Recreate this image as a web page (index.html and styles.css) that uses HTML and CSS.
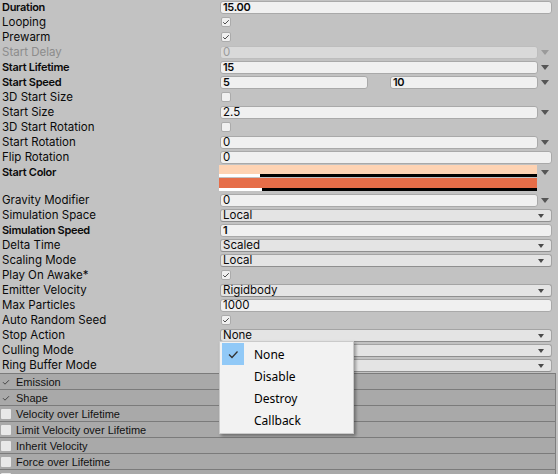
FILE: index.html
```html
<!DOCTYPE html>
<html>
<head>
<meta charset="utf-8">
<link rel="stylesheet" href="styles.css">
</head>
<body>
<div class="inspector">
  <div class="props">
    <div class="row"><div class="label b">Duration</div><div class="ctrl"><div class="field b">15.00</div></div></div>
    <div class="row"><div class="label">Looping</div><div class="ctrl"><span class="cb"><svg viewBox="0 0 10 10"><polyline points="2.2,5.2 4,7 7.8,3.2"/></svg></span></div></div>
    <div class="row"><div class="label">Prewarm</div><div class="ctrl"><span class="cb"><svg viewBox="0 0 10 10"><polyline points="2.2,5.2 4,7 7.8,3.2"/></svg></span></div></div>
    <div class="row dis"><div class="label">Start Delay</div><div class="ctrl"><div class="field">0</div><span class="curve"><svg viewBox="0 0 8 5"><polygon points="0,0 8,0 4,5"/></svg></span></div></div>
    <div class="row"><div class="label b">Start Lifetime</div><div class="ctrl"><div class="field b">15</div><span class="curve"><svg viewBox="0 0 8 5"><polygon points="0,0 8,0 4,5"/></svg></span></div></div>
    <div class="row"><div class="label b">Start Speed</div><div class="ctrl"><div class="pair"><div class="field b">5</div><div class="field b">10</div></div><span class="curve"><svg viewBox="0 0 8 5"><polygon points="0,0 8,0 4,5"/></svg></span></div></div>
    <div class="row"><div class="label">3D Start Size</div><div class="ctrl"><span class="cb"></span></div></div>
    <div class="row"><div class="label">Start Size</div><div class="ctrl"><div class="field">2.5</div><span class="curve"><svg viewBox="0 0 8 5"><polygon points="0,0 8,0 4,5"/></svg></span></div></div>
    <div class="row"><div class="label">3D Start Rotation</div><div class="ctrl"><span class="cb"></span></div></div>
    <div class="row"><div class="label">Start Rotation</div><div class="ctrl"><div class="field">0</div><span class="curve"><svg viewBox="0 0 8 5"><polygon points="0,0 8,0 4,5"/></svg></span></div></div>
    <div class="row"><div class="label">Flip Rotation</div><div class="ctrl"><div class="field">0</div></div></div>
    <div class="row tall"><div class="label b">Start Color</div><div class="ctrl"><div class="grad"><div class="band peach"></div><div class="strip s1"></div><div class="band orange"></div><div class="strip s2"></div></div><span class="curve"><svg viewBox="0 0 8 5"><polygon points="0,0 8,0 4,5"/></svg></span></div></div>
    <div class="row"><div class="label">Gravity Modifier</div><div class="ctrl"><div class="field">0</div><span class="curve"><svg viewBox="0 0 8 5"><polygon points="0,0 8,0 4,5"/></svg></span></div></div>
    <div class="row"><div class="label">Simulation Space</div><div class="ctrl"><div class="popup">Local</div></div></div>
    <div class="row"><div class="label b">Simulation Speed</div><div class="ctrl"><div class="field b">1</div></div></div>
    <div class="row"><div class="label">Delta Time</div><div class="ctrl"><div class="popup">Scaled</div></div></div>
    <div class="row"><div class="label">Scaling Mode</div><div class="ctrl"><div class="popup">Local</div></div></div>
    <div class="row"><div class="label">Play On Awake*</div><div class="ctrl"><span class="cb"><svg viewBox="0 0 10 10"><polyline points="2.2,5.2 4,7 7.8,3.2"/></svg></span></div></div>
    <div class="row"><div class="label">Emitter Velocity</div><div class="ctrl"><div class="popup">Rigidbody</div></div></div>
    <div class="row"><div class="label">Max Particles</div><div class="ctrl"><div class="field">1000</div></div></div>
    <div class="row"><div class="label">Auto Random Seed</div><div class="ctrl"><span class="cb"><svg viewBox="0 0 10 10"><polyline points="2.2,5.2 4,7 7.8,3.2"/></svg></span></div></div>
    <div class="row"><div class="label">Stop Action</div><div class="ctrl"><div class="popup">None</div></div></div>
    <div class="row"><div class="label">Culling Mode</div><div class="ctrl"><div class="popup"></div></div></div>
    <div class="row"><div class="label">Ring Buffer Mode</div><div class="ctrl"><div class="popup"></div></div></div>
  </div>
  <div class="modules">
    <div class="module"><span class="mcb on"><svg viewBox="0 0 10 10"><polyline points="2,5.2 4,7.2 8,3.2"/></svg></span>Emission</div>
    <div class="module"><span class="mcb on"><svg viewBox="0 0 10 10"><polyline points="2,5.2 4,7.2 8,3.2"/></svg></span>Shape</div>
    <div class="module"><span class="mcb"></span>Velocity over Lifetime</div>
    <div class="module"><span class="mcb"></span>Limit Velocity over Lifetime</div>
    <div class="module"><span class="mcb"></span>Inherit Velocity</div>
    <div class="module"><span class="mcb"></span>Force over Lifetime</div>
    <div class="module"><span class="mcb"></span>Color over Lifetime</div>
  </div>
  <div class="menu">
    <div class="item sel"><span class="gut"><svg viewBox="0 0 22 22"><polyline points="7,11.5 10,14.5 15.5,8.5"/></svg></span><span class="txt">None</span></div>
    <div class="item"><span class="gut"></span><span class="txt">Disable</span></div>
    <div class="item"><span class="gut"></span><span class="txt">Destroy</span></div>
    <div class="item"><span class="gut"></span><span class="txt">Callback</span></div>
  </div>
</div>
</body>
</html>
```
FILE: styles.css
```css
html, body {
  margin: 0;
  padding: 0;
}
body {
  background: #c2c2c2;
  font-family: Inter, "Liberation Sans", sans-serif;
  font-size: 11.5px;
  color: #0a0a0a;
  width: 558px;
  height: 474px;
  overflow: hidden;
}
.inspector {
  position: relative;
  width: 558px;
  height: 474px;
}
.row {
  display: flex;
  height: 15px;
}
.row.tall {
  height: 28px;
}
.label {
  width: 220px;
  flex: none;
  box-sizing: border-box;
  padding-left: 2px;
  line-height: 15px;
  white-space: nowrap;
}
.b {
  font-weight: 600;
  font-size: 11px;
  letter-spacing: -0.3px;
}
.ctrl {
  width: 332px;
  display: flex;
  align-items: flex-start;
}
.field {
  flex: 1;
  height: 13px;
  margin-top: 1px;
  box-sizing: border-box;
  background: #f0f0f0;
  border: 1px solid #a9a9a9;
  border-radius: 3px;
  padding-left: 2px;
  line-height: 11px;
  white-space: nowrap;
  overflow: hidden;
}
.pair {
  flex: 1;
  display: flex;
  gap: 22px;
}
.curve {
  width: 14px;
  height: 15px;
  flex: none;
  display: flex;
  align-items: center;
  justify-content: center;
}
.curve svg {
  width: 8px;
  height: 5px;
  fill: #555;
}
.dis .label {
  color: #8c8c8c;
}
.dis .field {
  background: #d9d9d9;
  border-color: #bdbdbd;
  color: #9b9b9b;
}
.dis .curve svg {
  fill: #9a9a9a;
}
.cb {
  width: 10px;
  height: 10px;
  margin: 2px 0 0 1px;
  box-sizing: border-box;
  background: #f0f0f0;
  border: 1px solid #ababab;
  border-radius: 2px;
  display: block;
}
.cb svg, .mcb svg {
  display: block;
  width: 100%;
  height: 100%;
  fill: none;
  stroke: #3a3a3a;
  stroke-width: 0.9;
}
.cb svg {
  margin: -1px;
  width: 10px;
  height: 10px;
}
.popup {
  flex: 1;
  position: relative;
  height: 13px;
  margin-top: 1px;
  box-sizing: border-box;
  background: #e4e4e4;
  border: 1px solid #a4a4a4;
  border-bottom-color: #8f8f8f;
  border-radius: 3px;
  padding-left: 2px;
  line-height: 11px;
}
.popup::after {
  content: "";
  position: absolute;
  right: 7px;
  top: 4px;
  border-left: 3.5px solid transparent;
  border-right: 3.5px solid transparent;
  border-top: 4px solid #4a4a4a;
}
.grad {
  flex: 1;
  margin-left: -1px;
  margin-right: 1px;
  display: flex;
  flex-direction: column;
}
.band {
  height: 10px;
}
.peach {
  height: 9px;
  background: #fed3b3;
}
.orange {
  background: #e66d48;
}
.strip {
  height: 3px;
  background: #000;
}
.s1 {
  background: linear-gradient(to right, #fff 41px, #000 41px);
  margin-bottom: 1px;
}
.s2 {
  background: linear-gradient(to right, #fff 43px, #000 43px);
}
.modules {
  width: 556px;
  border-right: 1px solid #7e7e7e;
  box-sizing: border-box;
}
.module {
  height: 16px;
  box-sizing: border-box;
  border-top: 1px solid #7b7b7b;
  background: #a9a9a9;
  display: flex;
  align-items: center;
  color: #111;
  white-space: nowrap;
  font-family: "Liberation Sans", Arial, sans-serif;
  font-size: 11px;
}
.mcb {
  width: 10px;
  height: 10px;
  margin: 0 5px 0 1px;
  background: #e9e9e9;
  border-radius: 1px;
  flex: none;
}
.mcb.on {
  background: transparent;
}
.menu {
  position: absolute;
  left: 219px;
  top: 341px;
  width: 135px;
  height: 93px;
  box-sizing: border-box;
  background: #f2f2f2;
  border: 1px solid #cacaca;
  box-shadow: 2px 2px 3px rgba(0, 0, 0, 0.35);
  padding-top: 1px;
  font-family: "Noto Sans", "Open Sans", sans-serif;
  font-size: 12px;
  color: #000;
}
.item {
  height: 22px;
  display: flex;
  align-items: center;
}
.gut {
  width: 22px;
  height: 22px;
  margin-left: 2px;
  flex: none;
}
.sel .gut {
  background: #91c9f7;
}
.gut svg {
  display: block;
  width: 22px;
  height: 22px;
  fill: none;
  stroke: #333;
  stroke-width: 1.3;
}
.txt {
  margin-left: 10px;
}
```
